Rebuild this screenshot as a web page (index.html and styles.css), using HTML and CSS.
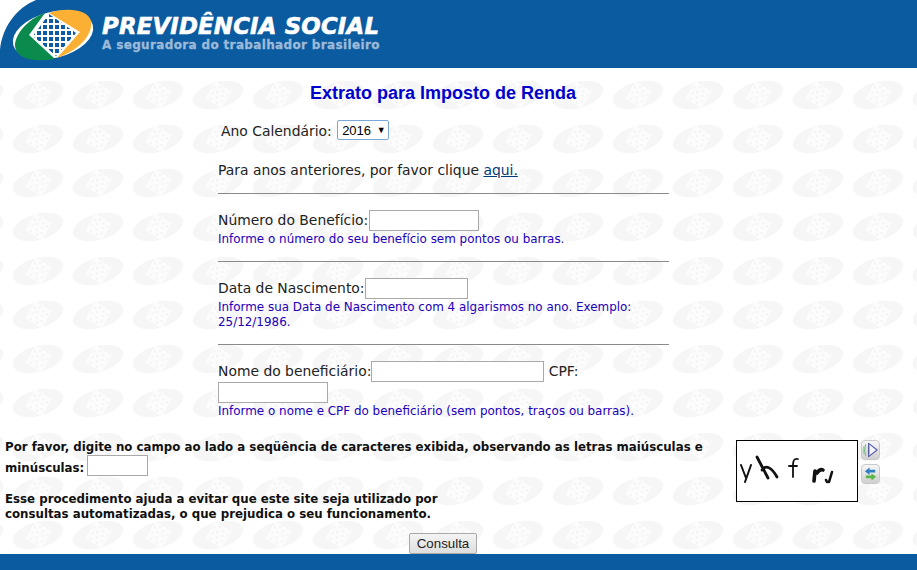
FILE: index.html
```html
<!DOCTYPE html>
<html lang="pt-BR">
<head>
    <meta charset="UTF-8">
    <meta name="viewport" content="width=device-width, initial-scale=1.0">
    <title>Extrato para Imposto de Renda</title>
    <link rel="stylesheet" href="styles.css">
</head>
<body>
    <header class="topo">
        <svg class="logo" width="100" height="68" viewBox="0 0 100 68">
            <defs>
                <pattern id="quadros" x="1" y="1" width="6" height="6" patternUnits="userSpaceOnUse">
                    <rect width="4" height="4" fill="#0c5ba4"/>
                </pattern>
            </defs>
            <path d="M0 0H36C16 8 2 28 0 50Z" fill="#fff"/>
            <ellipse cx="53" cy="35" rx="41" ry="23" transform="rotate(-14 53 35)" fill="#fff"/>
            <path d="M49 13C66 7 88 9 91 21C93 33 82 49 57 58L80 32Z" fill="#fbb034"/>
            <path d="M55 59C32 63 15 58 15 45C16 31 32 17 45 13L29 35Z" fill="#0a8a4c"/>
            <path d="M49 14L76 33L56 56L33 36Z" fill="url(#quadros)"/>
        </svg>
        <div class="marca">
            <div class="marca-nome">PREVIDÊNCIA SOCIAL</div>
            <div class="marca-lema">A seguradora do trabalhador brasileiro</div>
        </div>
    </header>

    <main class="conteudo">
        <h1 class="titulo">Extrato para Imposto de Renda</h1>

        <form class="form">
            <div class="ano">
                Ano Calendário:
                <span class="select-ano">2016 <span class="seta">▼</span></span>
            </div>

            <p class="anteriores">Para anos anteriores, por favor clique <a href="#">aqui.</a></p>
            <hr class="linha">

            <div class="campo">Número do Benefício:<input type="text" class="input-beneficio"></div>
            <div class="ajuda">Informe o número do seu benefício sem pontos ou barras.</div>
            <hr class="linha linha-2">

            <div class="campo">Data de Nascimento:<input type="text" class="input-data"></div>
            <div class="ajuda">Informe sua Data de Nascimento com 4 algarismos no ano. Exemplo: 25/12/1986.</div>
            <hr class="linha linha-3">

            <div class="campo">Nome do beneficiário:<input type="text" class="input-nome"> CPF: <input type="text" class="input-cpf"></div>
            <div class="ajuda">Informe o nome e CPF do beneficiário (sem pontos, traços ou barras).</div>
        </form>

        <section class="captcha">
            <div class="captcha-texto">
                <p class="captcha-pedido">Por favor, digite no campo ao lado a seqüência de caracteres exibida, observando as letras maiúsculas e minúsculas:<input type="text" class="input-captcha"></p>
                <p class="captcha-nota">Esse procedimento ajuda a evitar que este site seja utilizado por<br>consultas automatizadas, o que prejudica o seu funcionamento.</p>
            </div>
            <svg class="captcha-img" width="122" height="62" viewBox="1 1 120 60">
                <g fill="none" stroke="#111" stroke-linecap="round">
                    <path d="M5 25L10 38M15 25L9 42" stroke-width="2"/>
                    <path d="M21 17L32 38M26 30C30 24 36 28 41 37" stroke-width="2.8"/>
                    <path d="M62 19C58 18 57 21 57 25V37M53 26H61" stroke-width="1.8"/>
                    <path d="M79 31L78 41M81 33C83 30 85 29 87 30" stroke-width="3.6"/>
                    <path d="M90 40L91 42M96 32L93 42" stroke-width="2.6"/>
                </g>
            </svg>
            <div class="captcha-botoes">
                <button type="button" class="icone-btn" aria-label="Ouvir">
                    <svg width="18" height="18" viewBox="0 0 18 18">
                        <path d="M7 2L16 9L7 16Z" fill="#f4f4fb" stroke="#5a5fa8" stroke-width="1.3" stroke-linejoin="round"/>
                        <path d="M7 4.500V13.500" stroke="#5a5fa8" stroke-width="1.5"/>
                        <path d="M4 3C2.500 7 2.500 11 4 15" fill="none" stroke="#66bb77" stroke-width="1.2"/>
                        <path d="M2 5C1 8 1 10 2 13" fill="none" stroke="#88cc99" stroke-width="1"/>
                    </svg>
                </button>
                <button type="button" class="icone-btn" aria-label="Trocar">
                    <svg width="18" height="18" viewBox="0 0 18 18">
                        <path d="M3 6L8 2V4.500H14V7.500H8V10Z" fill="#2f7fc4"/>
                        <path d="M15 12L10 8.500V10.500H4V13.500H10V16Z" fill="#59b548"/>
                    </svg>
                </button>
            </div>
        </section>

        <div class="acoes">
            <button type="button" class="consulta">Consulta</button>
        </div>
    </main>

    <footer class="rodape"></footer>
</body>
</html>
```

FILE: styles.css
```css
html, body {
    height: 100%;
}

body {
    margin: 0;
    display: flex;
    flex-direction: column;
    font-family: "DejaVu Sans", Verdana, sans-serif;
    font-size: 13.9px;
    color: #222;
    background-color: #fff;
    overflow: hidden;
}

.topo {
    height: 68px;
    flex: none;
    display: flex;
    background-color: #0b5ba1;
}

.logo {
    flex: none;
}

.marca {
    margin-left: 2px;
    padding-top: 14px;
    color: #fff;
    font-weight: bold;
}

.marca-nome {
    font-size: 22.8px;
    line-height: 25px;
    font-style: italic;
    letter-spacing: 0.2px;
    -webkit-text-stroke: 0.6px #fff;
    white-space: nowrap;
}

.marca-lema {
    font-size: 12px;
    line-height: 12px;
    color: #9dbad8;
    letter-spacing: 0.35px;
    -webkit-text-stroke: 0.3px #9dbad8;
    white-space: nowrap;
}

.conteudo {
    flex: 1;
    display: flex;
    flex-direction: column;
    min-height: 0;
    /* marca d'agua repetida no fundo */
    background-image: url("data:image/svg+xml,%3Csvg xmlns='http://www.w3.org/2000/svg' width='60' height='44'%3E%3Cg transform='rotate(-15 30 22)'%3E%3Cellipse cx='30' cy='22' rx='26' ry='13' fill='%23f6f6f6'/%3E%3Cpath d='M17 22L31 8L44 22L30 36Z' fill='%23fcfcfc'/%3E%3Cg fill='%23f3f3f3'%3E%3Crect x='28' y='13' width='2' height='2'/%3E%3Crect x='33' y='14' width='2' height='2'/%3E%3Crect x='24' y='18' width='2' height='2'/%3E%3Crect x='29' y='18' width='2' height='2'/%3E%3Crect x='35' y='19' width='2' height='2'/%3E%3Crect x='21' y='23' width='2' height='2'/%3E%3Crect x='27' y='23' width='2' height='2'/%3E%3Crect x='33' y='23' width='2' height='2'/%3E%3Crect x='38' y='23' width='2' height='2'/%3E%3Crect x='26' y='28' width='2' height='2'/%3E%3Crect x='31' y='28' width='2' height='2'/%3E%3C/g%3E%3C/g%3E%3C/svg%3E");
    background-position: 8px 5px;
}

.titulo {
    margin: 15px 0 0;
    padding-right: 31px;
    text-align: center;
    font-family: "Liberation Sans", Arial, sans-serif;
    font-size: 18px;
    line-height: 21px;
    font-weight: bold;
    color: #0000cc;
}

.form {
    width: 451px;
    margin: 0 0 0 218px;
}

.ano {
    margin: 16px 0 0 3px;
    line-height: 22px;
}

.select-ano {
    display: inline-block;
    box-sizing: border-box;
    width: 52px;
    height: 20px;
    margin-left: 1px;
    padding-left: 4px;
    border: 1px solid #7ba6d8;
    border-radius: 2px;
    background: #fff;
    font-family: "Liberation Sans", Arial, sans-serif;
    font-size: 13px;
    line-height: 18px;
    color: #000;
    vertical-align: 1px;
}

.seta {
    font-size: 9px;
    vertical-align: 2px;
    margin-left: 2px;
}

.anteriores {
    margin: 18px 0 0;
    line-height: 20px;
}

.anteriores a {
    color: #003a78;
}

.linha {
    height: 1px;
    margin: 13px 0 0;
    border: 0;
    background-color: #8a8a8a;
}

.linha-2 {
    margin-top: 14px;
}

.linha-3 {
    margin-top: 14px;
}

.campo {
    margin-top: 16px;
    line-height: 21px;
}

input[type="text"] {
    box-sizing: border-box;
    height: 21px;
    margin: 0;
    padding: 0;
    border: 1px solid #a9a9a9;
    background: #fff;
    vertical-align: bottom;
}

.input-beneficio,
.input-cpf {
    width: 110px;
}

input.input-beneficio {
    margin-left: 1px;
}

.input-data {
    width: 103px;
}

.input-nome {
    width: 173px;
}

.ajuda {
    margin-top: 1px;
    font-size: 11.93px;
    line-height: 15px;
    color: #2200bb;
}

.captcha {
    display: flex;
    margin-top: 21px;
    padding-left: 5px;
}

.captcha-texto {
    width: 731px;
    font-size: 11.8px;
    font-weight: bold;
    color: #111;
}

.captcha-pedido {
    margin: 0;
    line-height: 15px;
}

.captcha-nota {
    margin: 16px 0 0;
    line-height: 15px;
}

input.input-captcha {
    width: 61px;
    margin-left: 3px;
}

.captcha-img {
    flex: none;
    box-sizing: border-box;
    border: 1px solid #000;
    background: #fff;
}

.captcha-botoes {
    display: flex;
    flex-direction: column;
    gap: 4px;
    margin-left: 3px;
}

.icone-btn {
    display: flex;
    align-items: center;
    justify-content: center;
    width: 19px;
    height: 20px;
    padding: 0;
    border: 1px solid #c9c9c9;
    border-radius: 4px;
    background: linear-gradient(#f7f7f7, #cfcfcf);
}

.acoes {
    margin-top: auto;
    padding-right: 31px;
    text-align: center;
    line-height: 0;
}

.consulta {
    height: 21px;
    width: 68px;
    padding: 0;
    border: 1px solid #a9a9a9;
    border-radius: 2px;
    background: linear-gradient(#f4f4f4, #dedede);
    font-family: "Liberation Sans", Arial, sans-serif;
    font-size: 13.3px;
    color: #222;
}

.rodape {
    height: 16px;
    flex: none;
    background-color: #0b5ba1;
}
```
